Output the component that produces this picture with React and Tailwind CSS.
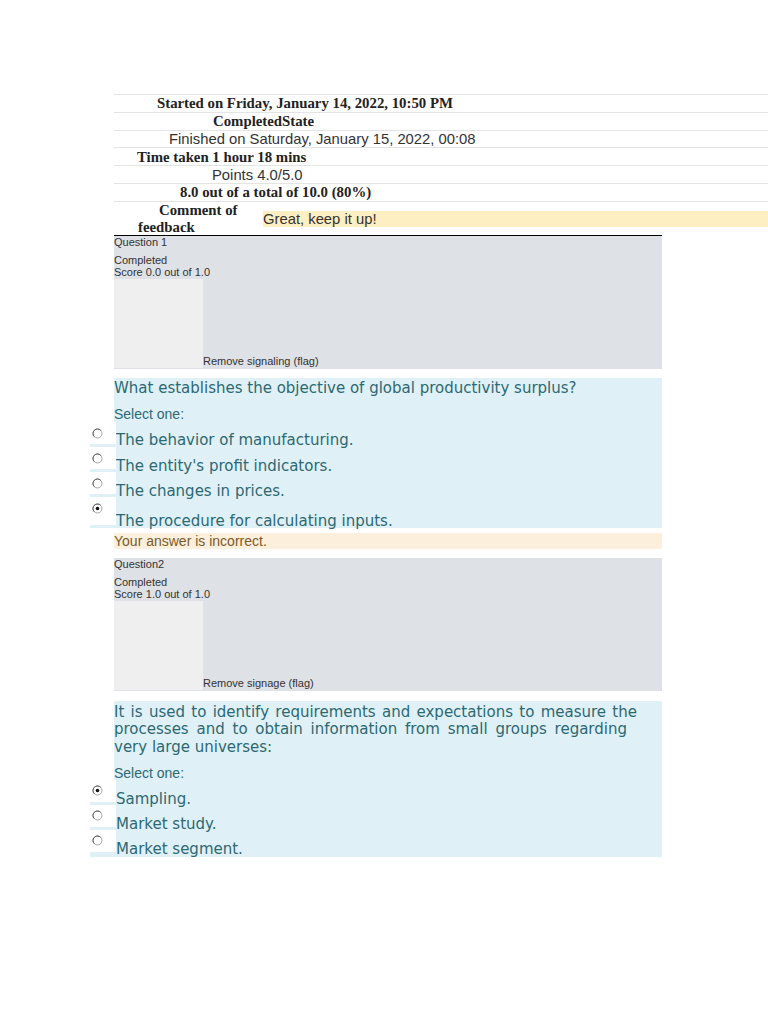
import React from 'react';

const serif = { fontFamily: '"Liberation Serif", "Times New Roman", serif' };

function Radio({ checked, top }) {
  return (
    <div className="w-[26px] h-full bg-white shrink-0 relative">
      <svg
        className="absolute left-[2px]"
        style={{ top }}
        width="11"
        height="11"
        viewBox="0 0 11 11"
      >
        <circle cx="5.5" cy="5.5" r="4.5" fill="#fff" stroke="#a5a5a5" strokeWidth="1" />
        <path d="M2.3 8.7 A4.5 4.5 0 0 1 8.7 2.3" fill="none" stroke="#5a5a5a" strokeWidth="1" />
        {checked && <circle cx="5.5" cy="5.5" r="1.8" fill="#111" />}
      </svg>
    </div>
  );
}

function Option({ label, checked, h, boxH, textTop, radioTop }) {
  return (
    <div className="-ml-[24px] w-[572px] bg-[#dff1f7] flex items-start" style={{ height: h }}>
      <div style={{ height: boxH }} className="flex">
        <Radio checked={checked} top={radioTop} />
      </div>
      <div
        className="text-[15px] leading-[18px] text-[#2d6873] whitespace-nowrap"
        style={{ fontFamily: '"DejaVu Sans", Verdana, sans-serif', paddingTop: textTop }}
      >
        {label}
      </div>
    </div>
  );
}

function InfoRow({ children, pad, sans }) {
  return (
    <div className="h-[17.8px] border-t border-[#e4e4e4] flex items-center">
      <span
        className={sans ? 'text-[14.8px] text-[#333] whitespace-nowrap' : 'text-[14.8px] font-bold text-[#222] whitespace-nowrap'}
        style={{ paddingLeft: pad, ...(sans ? { fontFamily: '"Liberation Sans", Arial, sans-serif' } : serif) }}
      >
        {children}
      </span>
    </div>
  );
}

function QuestionHead({ title, score, flag }) {
  return (
    <div
      className="w-[548px] bg-[#dee1e5] text-[11px] text-[#333] pb-[1px]"
      style={{ fontFamily: '"Liberation Sans", Arial, sans-serif' }}
    >
      <div className="leading-[12px]">{title}</div>
      <div className="leading-[12px] mt-[6px]">Completed</div>
      <div className="leading-[12px]">{score}</div>
      <div className="flex items-end mt-[1px]">
        <div className="w-[89px] h-[89px] bg-[#efefef]" />
        <div className="leading-[12px] pb-[1px]">{flag}</div>
      </div>
    </div>
  );
}

const qFont = { fontFamily: '"DejaVu Sans", Verdana, sans-serif' };
const selFont = { fontFamily: '"Liberation Sans", Arial, sans-serif' };

export default function App() {
  return (
    <div className="w-[768px] min-h-[1024px] bg-white pt-[94px] pl-[114px]">
      {/* attempt summary */}
      <InfoRow pad={43}>Started on Friday, January 14, 2022, 10:50 PM</InfoRow>
      <InfoRow pad={99}>CompletedState</InfoRow>
      <InfoRow pad={55} sans>Finished on Saturday, January 15, 2022, 00:08</InfoRow>
      <InfoRow pad={23}>Time taken 1 hour 18 mins</InfoRow>
      <InfoRow pad={98} sans>Points 4.0/5.0</InfoRow>
      <InfoRow pad={66}>8.0 out of a total of 10.0 (80%)</InfoRow>
      <div className="h-[34px] border-t border-[#e4e4e4] flex">
        <div className="w-[149px] text-[14.8px] font-bold text-[#222] leading-[17px]" style={serif}>
          <div className="pl-[45px]">Comment of</div>
          <div className="pl-[24px]">feedback</div>
        </div>
        <div
          className="flex-1 h-[16px] mt-[9px] bg-[#feefc2] text-[14.8px] leading-[16px] text-[#333]"
          style={selFont}
        >
          Great, keep it up!
        </div>
      </div>
      <div className="w-[548px] border-t border-black" />

      {/* question 1 */}
      <QuestionHead title="Question 1" score="Score 0.0 out of 1.0" flag="Remove signaling (flag)" />
      <div className="w-[548px] bg-[#dff1f7] mt-[9px]">
        <div className="pt-[1px] text-[15px] leading-[18px] text-[#2d6873]" style={qFont}>
          What establishes the objective of global productivity surplus?
        </div>
        <div className="mt-[9px] text-[14px] leading-[16px] text-[#2d6873]" style={selFont}>
          Select one:
        </div>
        <Option label="The behavior of manufacturing." h={25} boxH={22} textTop={9} radioTop={6} />
        <Option label="The entity's profit indicators." h={25} boxH={22} textTop={10} radioTop={6} />
        <Option label="The changes in prices." h={25} boxH={22} textTop={10} radioTop={6} />
        <Option label="The procedure for calculating inputs." checked h={31} boxH={28} textTop={15} radioTop={6} />
      </div>
      <div
        className="w-[548px] h-[16px] mt-[5px] bg-[#fcefdc] text-[14px] leading-[16px] text-[#7b5a2a]"
        style={selFont}
      >
        Your answer is incorrect.
      </div>

      {/* question 2 */}
      <div className="mt-[9px]">
        <QuestionHead title="Question2" score="Score 1.0 out of 1.0" flag="Remove signage (flag)" />
      </div>
      <div className="w-[548px] bg-[#dff1f7] mt-[10px]">
        <div className="pt-[3px] text-[15px] leading-[17.5px] text-[#2d6873]" style={qFont}>
          <div className="w-[523px] text-justify [text-align-last:justify]">
            It is used to identify requirements and expectations to measure the
          </div>
          <div className="w-[513px] text-justify [text-align-last:justify]">
            processes and to obtain information from small groups regarding
          </div>
          <div>very large universes:</div>
        </div>
        <div className="mt-[10px] text-[14px] leading-[14px] text-[#2d6873]" style={selFont}>
          Select one:
        </div>
        <Option label="Sampling." checked h={25} boxH={22} textTop={10} radioTop={5} />
        <Option label="Market study." h={25} boxH={22} textTop={10} radioTop={5} />
        <Option label="Market segment." h={27} boxH={22} textTop={10} radioTop={5} />
      </div>
    </div>
  );
}
